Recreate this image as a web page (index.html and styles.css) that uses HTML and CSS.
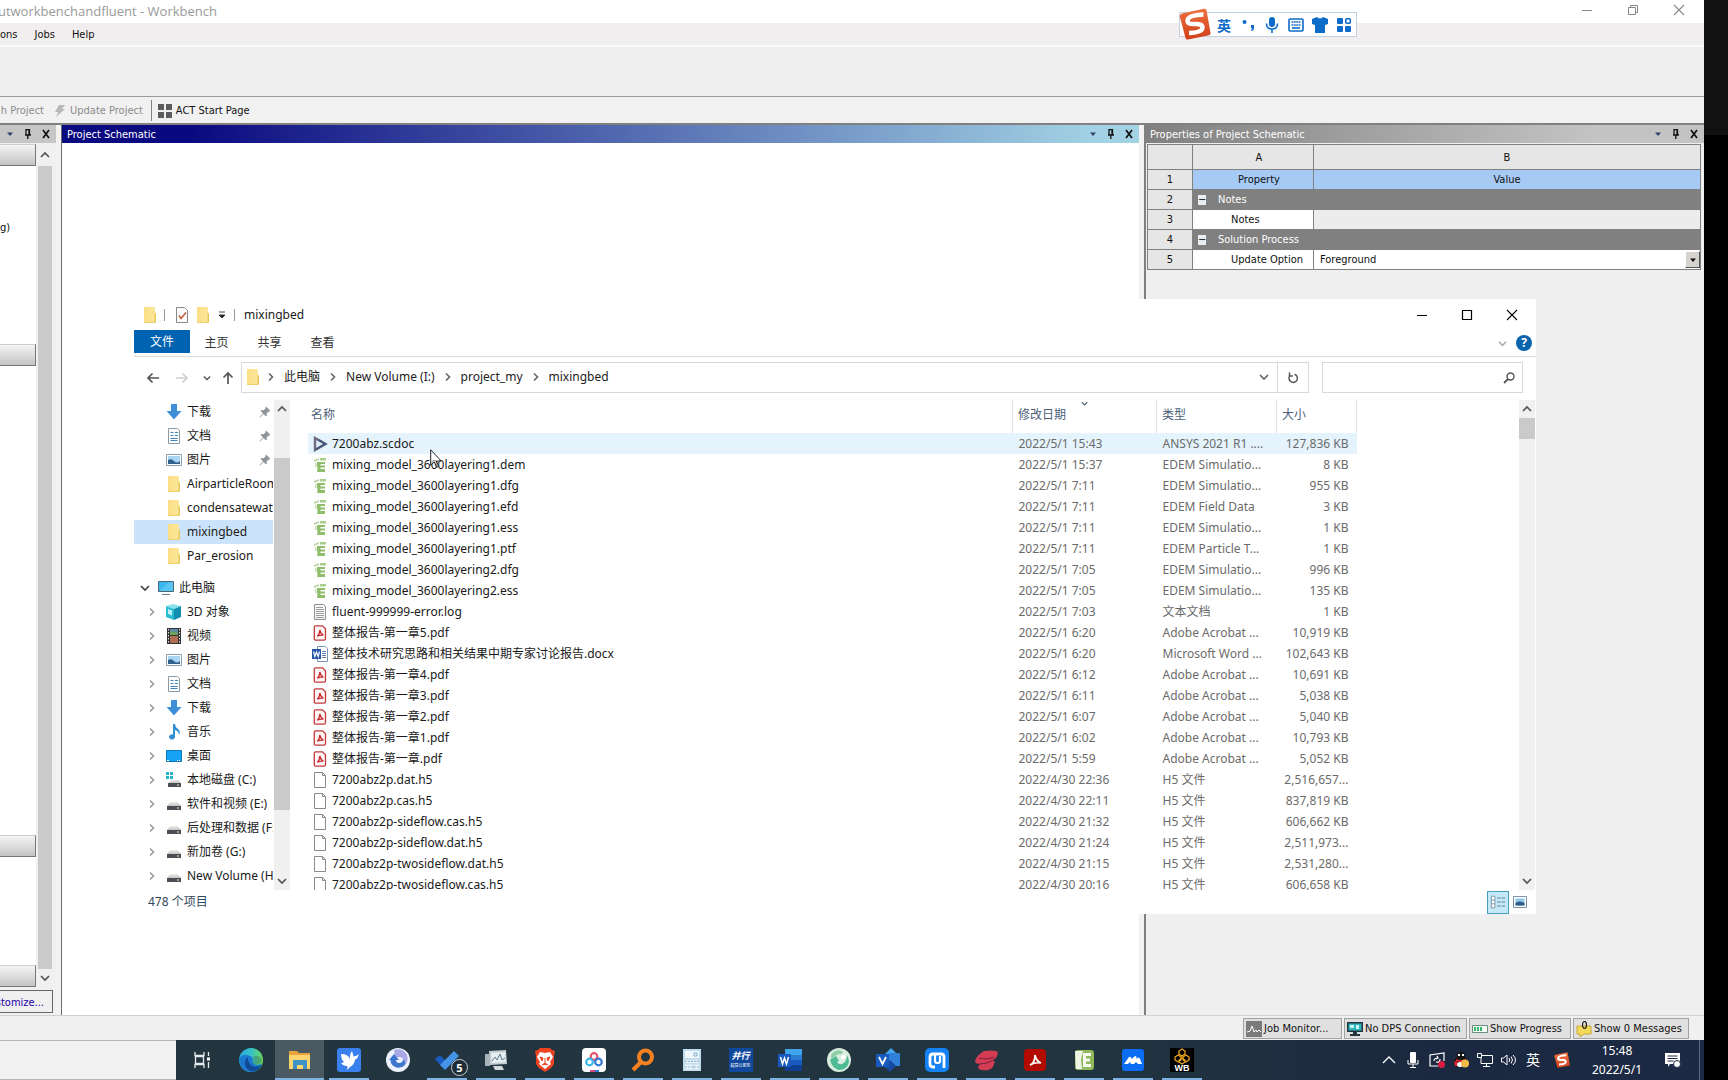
FILE: index.html
```html
<!DOCTYPE html>
<html lang="zh-CN">
<head>
<meta charset="utf-8">
<title>Workbench</title>
<link rel="stylesheet" href="styles.css">
</head>
<body>
<svg class="defs" aria-hidden="true">
  <defs>
    <linearGradient id="gFolder" x1="0" x2="1"><stop offset="0" stop-color="#fbdf85"/><stop offset="1" stop-color="#fbe79b"/></linearGradient>
    <linearGradient id="gEdge" x1="0" y1="0" x2="1" y2="0"><stop offset="0" stop-color="#2aa5dc"/><stop offset=".5" stop-color="#35c1c8"/><stop offset="1" stop-color="#6bd65a"/></linearGradient>
    <linearGradient id="gDisk" x1="0" y1="0" x2="0" y2="1"><stop offset="0" stop-color="#ededed"/><stop offset="1" stop-color="#c4c4c4"/></linearGradient>
    <linearGradient id="gSogou" x1="0" y1="0" x2="0" y2="1"><stop offset="0" stop-color="#f0703f"/><stop offset="1" stop-color="#cf4019"/></linearGradient>
  </defs>
  <symbol id="i-folder" viewBox="0 0 16 16"><path d="M2 0h11v5l1 2v9H2z" fill="url(#gFolder)"/><path d="M12.500 5.500v9l1.500 1.500V7z" fill="#e9c65a"/><path d="M2 15h12v1H2z" fill="#eccf6f"/></symbol>
  <symbol id="i-down" viewBox="0 0 16 16"><path d="M5 0h6v7h4.500L8 15.500.5 7H5z" fill="#3f8fd8"/></symbol>
  <symbol id="i-doc" viewBox="0 0 16 16"><path d="M2.500.5h9l2 2v13h-11z" fill="#fff" stroke="#8a9aa8"/><path d="M4.500 4.500h3M9 4.500h3M4.500 7.500h3M9 7.500h3M4.500 10.500h7M4.500 12.500h7" stroke="#3d86b5"/></symbol>
  <symbol id="i-pic" viewBox="0 0 16 16"><path d="M.5 2.500h15v11H.5z" fill="#fff" stroke="#8aa0b2"/><path d="M2 4h12v8H2z" fill="#a9d4f3"/><path d="M2 8q3-2 6 1t6 0v3H2z" fill="#2f618c"/></symbol>
  <symbol id="i-pin" viewBox="0 0 12 12"><path d="M7 .5 11.500 5l-1 .6-.8-.2-2 2 .2 2.100-.9.9L4.500 8 1 11.500.5 11 4 7.500 1.600 5l.9-.9 2.100.2 2-2-.2-.8z" fill="#8f959b"/></symbol>
  <symbol id="i-pc" viewBox="0 0 16 16"><path d="M.5 1.500h15v10H.5z" fill="#38b6ee" stroke="#4a6478"/><path d="M1 11 11 2h4v9z" fill="#7ad2f6" opacity=".5"/><path d="M4 14.500h8" stroke="#5a7a90"/></symbol>
  <symbol id="i-3d" viewBox="0 0 16 16"><path d="M0 2 7 0l8 2-7 3z" fill="#8ae0ee"/><path d="M0 2l8 3v11l-8-3z" fill="#2bbbd2"/><path d="M8 5l7-3v11l-7 3z" fill="#128fb0"/><path d="M2 5l4 1.500v5L2 10z" fill="#bdf3fa"/></symbol>
  <symbol id="i-video" viewBox="0 0 16 16"><path d="M1 0h14v16H1z" fill="#333"/><path d="M4 1h8v6H4z" fill="#5d8aa8"/><path d="M4 8h8v7H4z" fill="#b06f55"/><path d="M4 4q4-2 8 2v1H4z" fill="#6ea35a"/><path d="M2.500 1v14M13.500 1v14" stroke="#ddd" stroke-dasharray="1.500 1.500"/></symbol>
  <symbol id="i-music" viewBox="0 0 16 16"><path d="M7 0h2q0 3 3 5t1 6q0-4-4-5v6.500A3 2.600 0 1 1 7 10.500z" fill="#2f8fd3"/></symbol>
  <symbol id="i-desk" viewBox="0 0 16 16"><path d="M.5 2.500h15v11H.5z" fill="#17a3f5" stroke="#1277b6"/><path d="M1 12.500h2M11 12.500h1M13 12.500h1" stroke="#fff"/></symbol>
  <symbol id="i-disk" viewBox="0 0 16 16"><path d="M4 6h8l3 4H1z" fill="url(#gDisk)"/><path d="M1 10h14v4H1z" fill="#4b4f53"/><path d="M11 12h2" stroke="#dff5df"/></symbol>
  <symbol id="i-cdisk" viewBox="0 0 16 16"><path d="M0 0h3v3H0zM4 0h3v3H4zM0 4h3v3H0zM4 4h3v3H4z" fill="#25b3c9"/><path d="M5 8h8l2 3H3z" fill="url(#gDisk)"/><path d="M2 11h13v4H2z" fill="#4b4f53"/><path d="M11 13h2" stroke="#dff5df"/></symbol>
  <symbol id="i-scdoc" viewBox="0 0 16 16"><path d="M3 2v12l10.500-6z" fill="#dfe9f5" stroke="#6f6a80" stroke-width="2.400"/><path d="M3.500 13.500 13.500 8 7 4" fill="none" stroke="#3b5679" stroke-width="1.600"/></symbol>
  <symbol id="i-edem" viewBox="0 0 16 16"><path d="M2 3 7 1v2L2 5z" fill="#bcd7a3"/><path d="M5 5h8v2H8.500v1.500H13v2H8.500V12H13v3H5q1-3 0-6z" fill="#8fbd6a"/><path d="M8 1h6v2.500H8z" fill="#a9cd8a"/><path d="M3 6h1.500v4H3z" fill="#c8dfb3"/></symbol>
  <symbol id="i-log" viewBox="0 0 16 16"><path d="M2.500.5h9l2 2v13h-11z" fill="#f8f8f8" stroke="#8d8d8d"/><path d="M4 3.500h7M4 5.500h8M4 7.500h8M4 9.500h8M4 11.500h8M4 13.500h8" stroke="#9c9c9c"/></symbol>
  <symbol id="i-pdf" viewBox="0 0 16 16"><path d="M3.500.8h7l3 3v9.700q0 1.700-1.500 1.700H3.500Q2.300 15.200 2.300 14V2q0-1.200 1.200-1.200z" fill="#fff5f4" stroke="#c23a3c" stroke-width="1.300"/><path d="M5.200 11.200q2.300-1.500 2.600-6.200.8 4 3.600 5.200-3-.6-6.200 1z" fill="none" stroke="#c8282c" stroke-width="1.300"/></symbol>
  <symbol id="i-docx" viewBox="0 0 16 16"><path d="M5.500.5h8l2 2v13h-10z" fill="#fff" stroke="#7b94b5"/><path d="M10 5.500h4M10 7.500h4M10 9.500h4M10 11.500h4" stroke="#5a7dac"/><path d="M0 3h9v10H0z" fill="#2456a6"/><path d="m1.500 5.500 1.300 5L4.500 6l1.700 4.500 1.300-5" fill="none" stroke="#fff" stroke-width="1.200"/></symbol>
  <symbol id="i-file" viewBox="0 0 16 16"><path d="M2.500.5h8l3 3v12h-11z" fill="#fff" stroke="#8a8a8a"/><path d="M10.500.5v3h3" fill="none" stroke="#8a8a8a"/></symbol>
  <symbol id="i-props" viewBox="0 0 16 16"><path d="M2.500.5h8l3 3v12h-11z" fill="#fdfdfd" stroke="#85888c"/><path d="m5 8.500 2 3 5-6" fill="none" stroke="#c25b3a" stroke-width="1.500"/></symbol>
  <symbol id="i-chev" viewBox="0 0 10 10"><path d="m3 1.500 3.500 3.500L3 8.500" fill="none" stroke="currentColor" stroke-width="1.600"/></symbol>
  <symbol id="i-chevd" viewBox="0 0 10 10"><path d="m1 3 4 4 4-4" fill="none" stroke="currentColor" stroke-width="1.700"/></symbol>
  <symbol id="i-chevu" viewBox="0 0 10 10"><path d="m1 7 4-4 4 4" fill="none" stroke="currentColor" stroke-width="1.700"/></symbol>
  <symbol id="i-arrow" viewBox="0 0 14 14"><path d="M13 7H2M6.500 2.500 2 7l4.500 4.500" fill="none" stroke="currentColor" stroke-width="1.700"/></symbol>
  <symbol id="i-tri" viewBox="0 0 8 8"><path d="M1 2.500h6L4 6z" fill="currentColor"/></symbol>
  <symbol id="i-dpin" viewBox="0 0 10 10"><path d="M2 6h6M3 6V.7h3.500V6M6 .7V6M4.800 6v4" fill="none" stroke="currentColor" stroke-width="1.300"/></symbol>
  <symbol id="i-dx" viewBox="0 0 10 10"><path d="m2 1 6 8M8 1 2 9" stroke="currentColor" stroke-width="1.700"/></symbol>
  <symbol id="i-min" viewBox="0 0 12 12"><path d="M1 6.500h10" stroke="currentColor"/></symbol>
  <symbol id="i-max" viewBox="0 0 12 12"><path d="M1.500 1.500h9v9h-9z" fill="none" stroke="currentColor" stroke-width="1.200"/></symbol>
  <symbol id="i-restore" viewBox="0 0 12 12"><path d="M1.500 3.500h7v7h-7zM3.500 3.500v-2h7v7h-2" fill="none" stroke="currentColor"/></symbol>
  <symbol id="i-x" viewBox="0 0 12 12"><path d="m1 1 10 10M11 1 1 11" stroke="currentColor" stroke-width="1.100"/></symbol>
  <symbol id="i-sogou" viewBox="0 0 32 32"><path d="M3 5.500 25 .8q2-.4 2.500 1.500l4 22.500q.3 2-1.500 2.500L9 31.500q-2 .3-2.500-1.500L.8 8.500Q.5 6.200 3 5.500z" fill="url(#gSogou)"/><path d="M24.500 6.500Q9 7 8.500 12.500q-.3 4 7 3.500 8-.5 8 3.500 0 5-13.500 5.500" fill="none" stroke="#fff" stroke-width="4.400"/></symbol>
</svg>

<div class="display">
  <main class="screen">
    <section class="workbench">
      <header class="wb-title">
        <div class="cut title-cut"><span>outworkbenchandfluent - Workbench</span></div>
        <div class="wb-controls">
          <button aria-label="最小化"><svg><use href="#i-min"/></svg></button>
          <button aria-label="还原"><svg><use href="#i-restore"/></svg></button>
          <button aria-label="关闭"><svg><use href="#i-x"/></svg></button>
        </div>
      </header>
      <nav class="wb-menu"><button>ons</button><button>Jobs</button><button>Help</button></nav>
      <div class="wb-space"></div>
      <div class="wb-tools">
        <div class="cut tool-cut"><button disabled>h Project</button></div>
        <button disabled class="update"><svg viewBox="0 0 10 12"><path d="M4 0h6L7 4h3L1 12l2-5H0z" fill="#b9b9b9"/></svg>Update Project</button>
        <button class="act"><svg viewBox="0 0 14 14"><path d="M0 0h6v6H0zM8 0h6v6H8zM0 8h6v6H0zM8 8h6v6H8z" fill="#5c5c5c"/></svg>ACT Start Page</button>
      </div>
      <div class="docks">
        <aside class="toolbox">
          <div class="dock-head"><span class="grow"></span><button aria-label="菜单"><svg class="tri"><use href="#i-tri"/></svg></button><button aria-label="固定"><svg><use href="#i-dpin"/></svg></button><button aria-label="关闭"><svg><use href="#i-dx"/></svg></button></div>
          <div class="toolbox-body">
            <div class="groups">
              <div class="group"></div>
              <div class="group-items first"><span>g)</span></div>
              <div class="group"></div>
              <div class="group-items"></div>
              <div class="group"></div>
              <div class="group-items third"></div>
              <div class="group"></div>
            </div>
            <div class="scroll"><svg><use href="#i-chevu"/></svg><div class="thumb"></div><svg><use href="#i-chevd"/></svg></div>
          </div>
          <div class="customize"><a href="#">stomize...</a></div>
        </aside>
        <section class="schematic">
          <div class="dock-head active"><h2>Project Schematic</h2><button aria-label="菜单"><svg class="tri"><use href="#i-tri"/></svg></button><button aria-label="固定"><svg><use href="#i-dpin"/></svg></button><button aria-label="关闭"><svg><use href="#i-dx"/></svg></button></div>
        </section>
        <section class="properties">
          <div class="dock-head"><h2>Properties of Project Schematic</h2><button aria-label="菜单"><svg class="tri"><use href="#i-tri"/></svg></button><button aria-label="固定"><svg><use href="#i-dpin"/></svg></button><button aria-label="关闭"><svg><use href="#i-dx"/></svg></button></div>
          <table class="props">
            <colgroup><col class="c-num"><col class="c-a"><col></colgroup>
            <tr class="letters"><th></th><th class="a">A</th><th>B</th></tr>
            <tr class="names"><th>1</th><td class="a">Property</td><td>Value</td></tr>
            <tr class="sect"><th>2</th><td colspan="2"><i>−</i>Notes</td></tr>
            <tr><th>3</th><td class="pname">Notes</td><td class="empty"></td></tr>
            <tr class="sect"><th>4</th><td colspan="2"><i>−</i>Solution Process</td></tr>
            <tr><th>5</th><td class="pname"><label for="upd">Update Option</label></td><td class="pick"><div><select id="upd"><option>Foreground</option></select><span><svg class="tri"><use href="#i-tri"/></svg></span></div></td></tr>
          </table>
        </section>
      </div>
      <footer class="wb-status">
        <button class="b1"><svg viewBox="0 0 16 16"><path d="M0 0h16v16H0z" fill="#7b7b7b"/><path d="m1 11 3-1 2-5 2 6 2-2 1 2 2-2 2 2" fill="none" stroke="#fff"/></svg>Job Monitor...</button>
        <button class="b2"><svg viewBox="0 0 16 16"><path d="M0 1h16v10H0z" fill="#23353c"/><path d="M1.500 2.500h13v7h-13z" fill="#2fb5bd"/><path d="M3 4h4v3H3zM9 4h3v4H9z" fill="#c8f4f4"/><path d="M6 11h4v2h3v2H3v-2h3z" fill="#23353c"/></svg>No DPS Connection</button>
        <button class="b3"><svg viewBox="0 0 16 16"><path d="M.5 4.500h15v7H.5z" fill="#f3fbf5" stroke="#6a8f7b"/><path d="M2 6h2v4H2zM5 6h2v4H5zM8 6h2v4H8z" fill="#36b56c"/></svg>Show Progress</button>
        <button class="b4"><svg viewBox="0 0 16 16"><path d="M1 5h14v8H8l-4 3v-3H1z" fill="#f4d95a" stroke="#c9a93a"/><ellipse cx="8.500" cy="4" rx="2" ry="3.500" fill="none" stroke="#222" stroke-width="1.200"/></svg>Show 0 Messages</button>
      </footer>
    </section>

    <footer class="taskbar">
      <div class="search"></div>
      <div class="apps">
        <button aria-label="任务视图"><svg viewBox="0 0 24 24"><path d="M5 4v3.500h9V4M5 20v-3.500h9V20M5.500 8.500h8v7h-8zM18.500 4v4M18.500 14v6" fill="none" stroke="#e6ecee" stroke-width="1.300"/><path d="M17 9.500h3v3h-3z" fill="#fff"/></svg></button>
        <button aria-label="Edge"><svg viewBox="0 0 24 24"><circle cx="12" cy="12" r="12" fill="url(#gEdge)"/><path d="M0 12Q1 7 7 7q7 0 7 6-1 2 1 3 4 2 8-.5Q20 24 12 24 1 23 0 12z" fill="#1a79cf"/><path d="M9 9q-4 3-3 8 2 6 8 6.500 6-1 8.500-6.500-4 2.500-8 1.500-6-2-5.500-9.500z" fill="#114a98"/><path d="M13 10q3 2 1 4-1 2 2 2.500 5 .5 7-3.500 0-3-2-4-4-3-8 1z" fill="#233640" opacity=".25"/></svg></button>
        <button class="open current" aria-label="文件资源管理器"><svg viewBox="0 0 24 24"><path d="M1 3h8l2 2h11v16H1z" fill="#e8a33d"/><path d="M1 7h21v14H1z" fill="#fbd670"/><path d="M5 12h14v9h-4v-4H9v4H5z" fill="#3e93c4"/></svg></button>
        <button class="open" aria-label="迅雷"><svg viewBox="0 0 24 24"><rect width="24" height="24" rx="3" fill="#3a80ee"/><path d="M4 6q7 0 9 5-.5-5 2-8 1 3 1.500 5.500 3-.5 5.500-2.500-1 4-4 6-1 5-5 7l-3 3q1-3 0-4-4 0-6-3 2 0 3-1-3-3-3-8z" fill="#fff"/></svg></button>
        <button aria-label="浏览器"><svg viewBox="0 0 24 24"><circle cx="12" cy="12" r="12" fill="#eef2fc"/><path d="M8 2q9-3 13 5 2 7-3 10 2-6-4-8l-5 .5z" fill="#a9a8e6"/><path d="M5 9q-2 7 4 10 6 2 10-2 1-3-2-6 0 4-4 4-3 0-3-3h3L8 6 3 12h2z" fill="#3f77cf"/></svg></button>
        <button class="open" aria-label="To Do"><svg viewBox="0 0 24 24"><path d="m0 11 5-4 6 6-5 5z" fill="#185abd"/><path d="M5 17 19 3l5 5L10 22z" fill="#4593e6"/></svg><b>5</b></button>
        <button class="open" aria-label="监视器"><svg viewBox="0 0 24 24"><path d="m5 3 17-1 1 14-17 1z" fill="#c3ccd1"/><path d="m7 5 14-1 1 10-14 1z" fill="#e8eff3"/><path d="m8 13 3-4 2 3 3-6 2 6 3-2" fill="none" stroke="#5c7c92"/><path d="M1 6h5v12H1z" fill="#a8b2b8"/><path d="M9 18h9l2 4h-9z" fill="#d5d9db"/></svg></button>
        <button class="open" aria-label="Brave"><svg viewBox="0 0 24 24"><path d="M7 0h10l2 2 3 1-1 5 0 8-3 4-6 4-6-4-3-4V8L2 3l3-1z" fill="#ee4323"/><path d="m7 4 5 1 5-1 3 5-3 5 1 2-6 5-6-5 1-2-3-5z" fill="#fff"/><path d="m7 9 3 1-1 3zm10 0-3 1 1 3zM12 10v5m-3 2 3-2 3 2" fill="#ee4323" stroke="#ee4323"/></svg></button>
        <button class="open" aria-label="百度网盘"><svg viewBox="0 0 24 24"><rect width="24" height="24" rx="4" fill="#fff"/><g fill="none" stroke-width="2.200"><circle cx="12" cy="8.500" r="3.300" stroke="#e4516a"/><circle cx="7.500" cy="14" r="3.300" stroke="#39b6e6"/><circle cx="16.500" cy="14" r="3.300" stroke="#3478d6"/></g><path d="M8 22h5v2H8z" fill="#d44b7b"/><path d="M13 22h4v2h-4z" fill="#3478d6"/></svg></button>
        <button class="open" aria-label="Everything"><svg viewBox="0 0 24 24"><circle cx="14.500" cy="9" r="6.500" fill="none" stroke="#f58220" stroke-width="4"/><path d="m10 14-8 8" stroke="#f58220" stroke-width="4"/></svg></button>
        <button class="open" aria-label="计算器"><svg viewBox="0 0 24 24"><path d="M3 1h18v22H3z" fill="#c3dcec"/><path d="M5 3h14v7H5z" fill="#f2f9fd"/><path d="M14 5h3v3h-3z" fill="none" stroke="#78aecf"/><path d="M5 12.500h14v2.500H5zM5 16.500h8v5H5zM14.500 16.500H19v5h-4.500z" fill="#eaf4fa"/><path d="M5 13.500h14M5 19h14" stroke="#8db6d1" stroke-dasharray="2 1"/></svg></button>
        <button class="open cloud" aria-label="并行超算云服务"><span>并行</span><small>超算云服务</small></button>
        <button class="open" aria-label="Word"><svg viewBox="0 0 24 24"><path d="M7 1h17v6H7z" fill="#41a5ee"/><path d="M7 7h17v5H7z" fill="#2b7cd3"/><path d="M7 12h17v5H7z" fill="#185abd"/><path d="M7 17h17v6H7z" fill="#103f91"/><path d="M0 6h13v13H0z" fill="#185abd"/><path d="m2.500 9 2 7 2-6 2 6 2-7" fill="none" stroke="#fff" stroke-width="1.500"/></svg></button>
        <button class="open" aria-label="浏览器"><svg viewBox="0 0 24 24"><circle cx="12" cy="12" r="12" fill="#d8ecdf"/><path d="M3 12q2 8 9 10 8 0 10-8 0-4-2-7 0 7-5 9-3 1-5-2l2-1-3-5-5 3z" fill="#4dbb93"/><path d="M5 5q5-4 10-2 2 2-1 3-5 0-9 5-2-2 0-6z" fill="#8fd0a6"/><path d="M14 8q3-2 5 0-1 4-5 3z" fill="#fff"/></svg></button>
        <button class="open" aria-label="Visio"><svg viewBox="0 0 24 24"><path d="m15 0 6 6-6 6-6-6z" fill="#41a5ee"/><path d="M13 5h11v13H13z" fill="#2f80d8"/><path d="m14 12 6 6-6 6-6-6z" fill="#154a9c"/><path d="M0 6h13v13H0z" fill="#185abd"/><path d="m3 9 3.500 7L10 9" fill="none" stroke="#fff" stroke-width="1.800"/></svg></button>
        <button class="open" aria-label="MobaXterm"><svg viewBox="0 0 24 24"><rect width="24" height="24" rx="5" fill="#1681f2"/><path d="M10 19H8q-3 0-3-3V9q0-3 3-3h8q3 0 3 3v11" fill="none" stroke="#fff" stroke-width="2.800"/><path d="M10 6v7q0 2 2.500 2t2.500-2V8" fill="none" stroke="#fff" stroke-width="2.200"/></svg></button>
        <button class="open" aria-label="Mendeley"><svg viewBox="0 0 24 24"><path d="M10 3q7-1 12 0 3 1 1 5-1 3-5 4 4 1 2 4-1 5-6 6-6 1-9-1-2-2 1-5-5 0-5-3 2-6 9-10z" fill="#d33c52"/><path d="M5 10q9 2 15-1M5 16q7 0 13-3" fill="none" stroke="#7a1f3e"/></svg></button>
        <button class="open" aria-label="Acrobat"><svg viewBox="0 0 24 24"><rect x="1" y="1" width="22" height="22" rx="4" fill="#b30b00"/><path d="M7 17q5-2 5-10 1 6 6 8-6-1-11 2z" fill="none" stroke="#fff" stroke-width="1.700"/></svg></button>
        <button class="open" aria-label="EDEM"><svg viewBox="0 0 24 24"><rect x="3" y="2" width="19" height="20" rx="3" fill="#8fb95c"/><path d="M3 3h8l-2 9 1 9H4z" fill="#eef4e4"/><path d="M11 5h8v3h-5v2.500h4v3h-4V16h5v3h-8z" fill="#f5faee"/></svg></button>
        <button class="open" aria-label="会议"><svg viewBox="0 0 24 24"><rect x="1" y="1" width="22" height="22" rx="3" fill="#0b6cf4"/><path d="m3 16 5-7q2-1 2.500 2L14 8q2 0 1.500 3Q18 8 19 11l2 5h-4l-2-2-2 2h-3l-1-2-2 2z" fill="#fff"/></svg></button>
        <button class="open" aria-label="Workbench"><svg viewBox="0 0 24 24"><path d="M0 0h24v24H0z" fill="#000"/><path d="m12 1 3 2v3l-3 2-3-2V3zM8 7l3 2v3l-3 2-3-2V9zM16 7l3 2v3l-3 2-3-2V9zM12 10l3 2v2l-3 2-3-2v-2z" fill="none" stroke="#eaa21c" stroke-width="1.300"/><text x="12" y="23" text-anchor="middle" class="wb-txt">WB</text></svg></button>
      </div>
      <div class="tray">
        <button aria-label="显示隐藏的图标"><svg viewBox="0 0 16 16"><path d="m2 11 6-6 6 6" fill="none" stroke="#fff" stroke-width="1.300"/></svg></button>
        <button aria-label="麦克风"><svg viewBox="0 0 16 16"><rect x="5" y="0" width="6" height="11" rx="1" fill="#fff"/><path d="M3 8v4h10V8M8 12v3M5 15.500h6" fill="none" stroke="#fff"/></svg></button>
        <button aria-label="更新"><svg viewBox="0 0 16 16"><path d="M15 9V1L1 3v11h8M5 9q0-3 4-3M7 10q4 1 4-3M8 4l1 2-2 1" fill="none" stroke="#fff" stroke-width="1.200"/><circle cx="12.500" cy="12.500" r="3.500" fill="#d91c3f"/></svg></button>
        <button aria-label="QQ"><svg viewBox="0 0 16 16"><path d="M8 0q4 0 4 5l3 5-2 1-1 4H3l-1-4-2-1 4-5q0-5 4-5z" fill="#141414"/><path d="M5 2h2v2H5zM9 2h2v2H9z" fill="#fff"/><path d="M3 7q5 2 10 0l-1 3q-5 1-9-1z" fill="#d8202d"/><path d="M1 10l3-2 1 6H2z" fill="#d8202d"/><ellipse cx="7" cy="12.500" rx="3" ry="2.500" fill="#fff"/><circle cx="12" cy="11.500" r="4" fill="#f1b94a"/></svg></button>
        <button aria-label="网络"><svg viewBox="0 0 16 16"><path d="M5 3.500h10.500v8H4V6M9.500 12v2.500M6 14.500h7M.5 1.500h4v4h-4z" fill="none" stroke="#fff"/></svg></button>
        <button aria-label="音量"><svg viewBox="0 0 16 16"><path d="M.5 6h2L6 3v10l-3.500-3h-2zM8 6q1.500 2 0 4M10 4.500q3 3.500 0 7M12 3q5 5 0 10" fill="none" stroke="#fff"/></svg></button>
        <button class="lang">英</button>
        <button class="sg" aria-label="搜狗"><svg><use href="#i-sogou"/></svg></button>
        <button class="clock"><span>15:48</span><span>2022/5/1</span></button>
        <button class="note" aria-label="通知"><svg viewBox="0 0 16 16"><path d="M0 1h15v11H5l-2 3v-3H0z" fill="#fff"/><path d="M2.500 4h10M2.500 6.500h10M2.500 9h6" stroke="#1d2b42"/><circle cx="12" cy="12" r="3.500" fill="#fff" stroke="#1d2b42"/></svg></button>
      </div>
    </footer>

    <section class="explorer">
      <header class="ex-title">
        <svg><use href="#i-folder"/></svg><span class="bar"></span>
        <svg><use href="#i-props"/></svg><svg><use href="#i-folder"/></svg>
        <svg class="qa" viewBox="0 0 8 8"><path d="M1 1h6M1 4h6L4 7z" fill="#222" stroke="#222" stroke-width=".8"/></svg><span class="bar"></span>
        <h1>mixingbed</h1>
        <button aria-label="最小化"><svg><use href="#i-min"/></svg></button>
        <button aria-label="最大化"><svg><use href="#i-max"/></svg></button>
        <button aria-label="关闭"><svg><use href="#i-x"/></svg></button>
      </header>
      <nav class="ribbon"><button class="file">文件</button><button>主页</button><button>共享</button><button>查看</button><span class="grow"></span><svg class="fold"><use href="#i-chevd"/></svg><button class="help">?</button></nav>
      <div class="address">
        <button aria-label="后退"><svg><use href="#i-arrow"/></svg></button>
        <button class="off" aria-label="前进"><svg class="flip"><use href="#i-arrow"/></svg></button>
        <button class="recent" aria-label="最近"><svg><use href="#i-chevd"/></svg></button>
        <button class="up" aria-label="向上"><svg class="turn"><use href="#i-arrow"/></svg></button>
        <div class="path">
          <svg class="fold-icon"><use href="#i-folder"/></svg>
          <svg><use href="#i-chev"/></svg><a href="#">此电脑</a>
          <svg><use href="#i-chev"/></svg><a href="#">New Volume (I:)</a>
          <svg><use href="#i-chev"/></svg><a href="#">project_my</a>
          <svg><use href="#i-chev"/></svg><a href="#">mixingbed</a>
          <span class="grow"></span>
          <svg><use href="#i-chevd"/></svg>
          <button aria-label="刷新"><svg viewBox="0 0 12 12"><path d="M7.500 2.200A4.200 4.200 0 1 1 3 3.500M2.500.500v3.500H6" fill="none" stroke="#555" stroke-width="1.500"/></svg></button>
        </div>
        <label class="find"><input type="text" aria-label="搜索"><svg viewBox="0 0 12 12"><circle cx="7.500" cy="4.500" r="3.500" fill="none" stroke="#555" stroke-width="1.400"/><path d="M5 7 1 11" stroke="#555" stroke-width="1.800"/></svg></label>
      </div>
      <div class="ex-body">
        <nav class="tree">
          <ul>
            <li><svg><use href="#i-down"/></svg><span>下载</span><svg class="pin"><use href="#i-pin"/></svg></li>
            <li><svg><use href="#i-doc"/></svg><span>文档</span><svg class="pin"><use href="#i-pin"/></svg></li>
            <li><svg><use href="#i-pic"/></svg><span>图片</span><svg class="pin"><use href="#i-pin"/></svg></li>
            <li><svg><use href="#i-folder"/></svg><span>AirparticleRoom</span></li>
            <li><svg><use href="#i-folder"/></svg><span>condensatewater</span></li>
            <li class="sel"><svg><use href="#i-folder"/></svg><span>mixingbed</span></li>
            <li><svg><use href="#i-folder"/></svg><span>Par_erosion</span></li>
          </ul>
          <ul class="pc">
            <li class="root"><svg class="tw"><use href="#i-chevd"/></svg><svg><use href="#i-pc"/></svg><span>此电脑</span></li>
            <li><svg class="tw"><use href="#i-chev"/></svg><svg><use href="#i-3d"/></svg><span>3D 对象</span></li>
            <li><svg class="tw"><use href="#i-chev"/></svg><svg><use href="#i-video"/></svg><span>视频</span></li>
            <li><svg class="tw"><use href="#i-chev"/></svg><svg><use href="#i-pic"/></svg><span>图片</span></li>
            <li><svg class="tw"><use href="#i-chev"/></svg><svg><use href="#i-doc"/></svg><span>文档</span></li>
            <li><svg class="tw"><use href="#i-chev"/></svg><svg><use href="#i-down"/></svg><span>下载</span></li>
            <li><svg class="tw"><use href="#i-chev"/></svg><svg><use href="#i-music"/></svg><span>音乐</span></li>
            <li><svg class="tw"><use href="#i-chev"/></svg><svg><use href="#i-desk"/></svg><span>桌面</span></li>
            <li><svg class="tw"><use href="#i-chev"/></svg><svg><use href="#i-cdisk"/></svg><span>本地磁盘 (C:)</span></li>
            <li><svg class="tw"><use href="#i-chev"/></svg><svg><use href="#i-disk"/></svg><span>软件和视频 (E:)</span></li>
            <li><svg class="tw"><use href="#i-chev"/></svg><svg><use href="#i-disk"/></svg><span>后处理和数据 (F:)</span></li>
            <li><svg class="tw"><use href="#i-chev"/></svg><svg><use href="#i-disk"/></svg><span>新加卷 (G:)</span></li>
            <li><svg class="tw"><use href="#i-chev"/></svg><svg><use href="#i-disk"/></svg><span>New Volume (H:)</span></li>
          </ul>
        </nav>
        <div class="scroll tree-scroll"><svg><use href="#i-chevu"/></svg><div class="thumb"></div><svg><use href="#i-chevd"/></svg></div>
        <div class="list">
          <table class="files">
            <colgroup><col><col class="c-date"><col class="c-type"><col class="c-size"></colgroup>
            <thead><tr><th>名称</th><th class="sorted">修改日期<svg><use href="#i-chevd"/></svg></th><th>类型</th><th>大小</th></tr></thead>
            <tbody>
              <tr class="hover"><td><svg><use href="#i-scdoc"/></svg>7200abz.scdoc</td><td>2022/5/1 15:43</td><td>ANSYS 2021 R1 ....</td><td>127,836 KB</td></tr>
              <tr><td><svg><use href="#i-edem"/></svg>mixing_model_3600layering1.dem</td><td>2022/5/1 15:37</td><td>EDEM Simulatio...</td><td>8 KB</td></tr>
              <tr><td><svg><use href="#i-edem"/></svg>mixing_model_3600layering1.dfg</td><td>2022/5/1 7:11</td><td>EDEM Simulatio...</td><td>955 KB</td></tr>
              <tr><td><svg><use href="#i-edem"/></svg>mixing_model_3600layering1.efd</td><td>2022/5/1 7:11</td><td>EDEM Field Data</td><td>3 KB</td></tr>
              <tr><td><svg><use href="#i-edem"/></svg>mixing_model_3600layering1.ess</td><td>2022/5/1 7:11</td><td>EDEM Simulatio...</td><td>1 KB</td></tr>
              <tr><td><svg><use href="#i-edem"/></svg>mixing_model_3600layering1.ptf</td><td>2022/5/1 7:11</td><td>EDEM Particle T...</td><td>1 KB</td></tr>
              <tr><td><svg><use href="#i-edem"/></svg>mixing_model_3600layering2.dfg</td><td>2022/5/1 7:05</td><td>EDEM Simulatio...</td><td>996 KB</td></tr>
              <tr><td><svg><use href="#i-edem"/></svg>mixing_model_3600layering2.ess</td><td>2022/5/1 7:05</td><td>EDEM Simulatio...</td><td>135 KB</td></tr>
              <tr><td><svg><use href="#i-log"/></svg>fluent-999999-error.log</td><td>2022/5/1 7:03</td><td>文本文档</td><td>1 KB</td></tr>
              <tr><td><svg><use href="#i-pdf"/></svg>整体报告-第一章5.pdf</td><td>2022/5/1 6:20</td><td>Adobe Acrobat ...</td><td>10,919 KB</td></tr>
              <tr><td><svg><use href="#i-docx"/></svg>整体技术研究思路和相关结果中期专家讨论报告.docx</td><td>2022/5/1 6:20</td><td>Microsoft Word ...</td><td>102,643 KB</td></tr>
              <tr><td><svg><use href="#i-pdf"/></svg>整体报告-第一章4.pdf</td><td>2022/5/1 6:12</td><td>Adobe Acrobat ...</td><td>10,691 KB</td></tr>
              <tr><td><svg><use href="#i-pdf"/></svg>整体报告-第一章3.pdf</td><td>2022/5/1 6:11</td><td>Adobe Acrobat ...</td><td>5,038 KB</td></tr>
              <tr><td><svg><use href="#i-pdf"/></svg>整体报告-第一章2.pdf</td><td>2022/5/1 6:07</td><td>Adobe Acrobat ...</td><td>5,040 KB</td></tr>
              <tr><td><svg><use href="#i-pdf"/></svg>整体报告-第一章1.pdf</td><td>2022/5/1 6:02</td><td>Adobe Acrobat ...</td><td>10,793 KB</td></tr>
              <tr><td><svg><use href="#i-pdf"/></svg>整体报告-第一章.pdf</td><td>2022/5/1 5:59</td><td>Adobe Acrobat ...</td><td>5,052 KB</td></tr>
              <tr><td><svg><use href="#i-file"/></svg>7200abz2p.dat.h5</td><td>2022/4/30 22:36</td><td>H5 文件</td><td>2,516,657...</td></tr>
              <tr><td><svg><use href="#i-file"/></svg>7200abz2p.cas.h5</td><td>2022/4/30 22:11</td><td>H5 文件</td><td>837,819 KB</td></tr>
              <tr><td><svg><use href="#i-file"/></svg>7200abz2p-sideflow.cas.h5</td><td>2022/4/30 21:32</td><td>H5 文件</td><td>606,662 KB</td></tr>
              <tr><td><svg><use href="#i-file"/></svg>7200abz2p-sideflow.dat.h5</td><td>2022/4/30 21:24</td><td>H5 文件</td><td>2,511,973...</td></tr>
              <tr><td><svg><use href="#i-file"/></svg>7200abz2p-twosideflow.dat.h5</td><td>2022/4/30 21:15</td><td>H5 文件</td><td>2,531,280...</td></tr>
              <tr><td><svg><use href="#i-file"/></svg>7200abz2p-twosideflow.cas.h5</td><td>2022/4/30 20:16</td><td>H5 文件</td><td>606,658 KB</td></tr>
            </tbody>
          </table>
        </div>
        <div class="scroll list-scroll"><svg><use href="#i-chevu"/></svg><div class="thumb"></div><span class="grow"></span><svg><use href="#i-chevd"/></svg></div>
      </div>
      <footer class="ex-status"><span>478 个项目</span><span class="grow"></span>
        <button class="on" aria-label="详细信息"><svg viewBox="0 0 18 16"><path d="M1.500 1.500h4v13h-4zM1.500 6h4M1.500 10h4" fill="#fff" stroke="#7790a0"/><path d="M8 3.500h9M8 8h9M8 12.500h9" stroke="#51788f" stroke-dasharray="4 1"/></svg></button>
        <button aria-label="大图标"><svg viewBox="0 0 16 16"><path d="M1.500 2.500h13v11h-13z" fill="#fff" stroke="#7e93a3"/><path d="M3.500 4.500h9v7h-9z" fill="#8fc7e8"/><path d="M3.500 9q4-3 9 0v2.500h-9z" fill="#2d5c86"/></svg></button>
      </footer>
    </section>

    <div class="ime">
      <svg class="ime-s"><use href="#i-sogou"/></svg>
      <button class="ime-lang">英</button>
      <button aria-label="标点"><svg viewBox="0 0 16 16"><circle cx="4.500" cy="5" r="2" fill="#0d6cc9"/><path d="M11 8h3v3q0 2.500-3 3l1-3h-1z" fill="#0d6cc9"/></svg></button>
      <button aria-label="语音"><svg viewBox="0 0 16 16"><rect x="5" y="0" width="6" height="10" rx="3" fill="#0d6cc9"/><path d="M2.500 6.500q0 5.500 5.500 5.500t5.500-5.500M8 12v4" fill="none" stroke="#0d6cc9" stroke-width="1.600"/></svg></button>
      <button aria-label="软键盘"><svg viewBox="0 0 16 16"><rect x="1" y="2" width="14" height="12" rx="1" fill="none" stroke="#0d6cc9" stroke-width="1.600"/><path d="M3.500 5h9M3.500 8h9" stroke="#0d6cc9" stroke-width="1.700" stroke-dasharray="1.800 .6"/><path d="M4 11h8" stroke="#0d6cc9" stroke-width="1.600"/></svg></button>
      <button aria-label="皮肤"><svg viewBox="0 0 16 16"><path d="M0 2 5 0q3 3 6 0l5 2v5l-3 1v8H3V8L0 7z" fill="#0d6cc9"/></svg></button>
      <button aria-label="工具箱"><svg viewBox="0 0 16 16"><rect x="1" y="1" width="6" height="6" rx="1" fill="#0d6cc9"/><rect x="9.800" y="1.800" width="4.500" height="4.500" rx="1" fill="none" stroke="#0d6cc9" stroke-width="1.600"/><rect x="1" y="9" width="6" height="6" rx="1" fill="#0d6cc9"/><rect x="9" y="9" width="6" height="6" rx="1" fill="#0d6cc9"/></svg></button>
    </div>
    <svg class="cursor" viewBox="0 0 12 19"><path d="M.7.800v15.500l3.600-3.400 2.300 5.300 2-.9-2.300-5.200h5z" fill="#fff" fill-opacity=".5" stroke="#222"/></svg>
  </main>
  <div class="edge"></div>
</div>
</body>
</html>
```
FILE: styles.css
```css
* { box-sizing: border-box; }
body { margin: 0; font: 12px/16px "Noto Sans", "Noto Sans CJK SC", sans-serif; color: #1a1a1a; }
button { border: 0; padding: 0; background: none; font: inherit; color: inherit; display: flex; align-items: center; justify-content: center; flex: none; }
h1, h2 { margin: 0; font: inherit; }
ul { list-style: none; margin: 0; padding: 0; }
a { color: inherit; text-decoration: none; }
svg { flex: none; display: block; }
table { border-collapse: collapse; table-layout: fixed; }
.defs { position: absolute; width: 0; height: 0; }
.grow { flex: 1; }
.display { display: flex; min-height: 100vh; background: #000; }
.edge { width: 24px; background: linear-gradient(#111 135px, #000 135px); }
.screen { position: relative; flex: 1; min-width: 0; display: flex; flex-direction: column; }

/* Workbench main window */
.workbench { flex: 1; display: flex; flex-direction: column; background: #f0efef; font: 11px/16px "DejaVu Sans Condensed", "DejaVu Sans", sans-serif; color: #111; }
.cut { display: flex; justify-content: flex-end; overflow: hidden; white-space: nowrap; flex: none; }
.wb-title { height: 23px; background: #fff; display: flex; justify-content: space-between; color: #999; font: 13px/22px "Open Sans", sans-serif; }
.title-cut { width: 217px; }
.wb-controls { display: flex; color: #888; height: 20px; padding-right: 2px; }
.wb-controls button { width: 46px; }
.wb-controls svg { width: 12px; height: 12px; }
.wb-menu { height: 24px; display: flex; gap: 17px; padding-top: 2px; border-bottom: 2px solid #fafafa; background: #f1eeef; }
.wb-space { height: 50px; border-bottom: 1px solid #9a9a9a; }
.wb-tools { height: 28px; display: flex; align-items: center; padding-top: 1px; background: #f1f1f1; border-bottom: 2px solid #808080; }
.wb-tools button:disabled { color: #8b8b8b; }
.tool-cut { width: 44px; margin-right: 11px; }
.update { gap: 5px; }
.update svg { width: 10px; height: 12px; }
.act { margin-left: 8px; border-left: 1px solid #808080; height: 21px; padding-left: 6px; gap: 4px; }
.act svg { width: 14px; height: 14px; }
.docks { flex: 1; display: flex; background: #f2f2f2; }
.dock-head { height: 18px; flex: none; display: flex; align-items: center; padding-right: 1px; color: #111; background: linear-gradient(90deg, #808080, #c3c3c3 80%); }
.dock-head h2 { flex: 1; color: #fff; padding: 2px 0 0 5px; }
.dock-head button { width: 18px; height: 18px; }
.dock-head svg { width: 10px; height: 10px; }
.dock-head .tri { width: 8px; height: 8px; color: #33406b; }
.dock-head.active { background: linear-gradient(90deg, #0a0a80 12%, #a2d2e4 96%); }
.toolbox { width: 56px; margin-right: 5px; display: flex; flex-direction: column; background: #f0f0f0; }
.toolbox .dock-head { background: #c6c6c6; margin-bottom: 1px; }
.toolbox-body { flex: 1; display: flex; gap: 2px; }
.groups { width: 36px; display: flex; flex-direction: column; background: #fff; }
.group { height: 22px; border: 1px solid #777; border-left: 0; border-top-color: #ccc; background: linear-gradient(#f5f5f5, #c4c4c4); }
.group-items { flex: 468; }
.group-items.first { flex: 178; }
.group-items.first span { display: block; margin-top: 54px; }
.group-items.third { flex: 108; }
.scroll { width: 16px; flex: none; display: flex; flex-direction: column; align-items: center; background: #f0f0f0; color: #555; }
.scroll > svg { width: 10px; height: 10px; margin: 4px 0; }
.scroll .thumb { align-self: stretch; background: #cacaca; }
.toolbox .scroll { width: 14px; }
.toolbox .scroll > svg { margin: 6px 0; }
.toolbox .scroll > svg:last-child { margin: 4px 0; }
.toolbox .thumb { flex: 1; }
.customize { height: 23px; width: 53px; margin: 3px 0 2px; border: 1px solid #666; border-left: 0; color: #1a00a8; padding: 4px 8px 0 0; display: flex; justify-content: flex-end; overflow: hidden; }
.schematic { flex: 1; border-left: 1px solid #707070; background: #fff; margin-right: 5px; }
.properties { width: 560px; border-left: 2px solid #808080; background: #efefef; }
.properties .dock-head h2 { padding-left: 4px; }
.props { width: calc(100% - 4px); margin: 1px 0 0 1px; text-align: center; background: #fff; }
.c-num { width: 45px; }
.c-a { width: 121px; }
.props th, .props td { height: 20px; padding: 0; font-weight: normal; border: 1px solid #808080; line-height: 18px; }
.props th { background: #e6e6e6; }
.props .a { padding-left: 12px; }
.props .letters th { height: 25px; padding-top: 2px; }
.props .names td { background: #a6caf4; }
.props .sect td { background: #808080; color: #fff; text-align: left; padding-left: 5px; }
.sect i { display: inline-block; width: 8px; height: 10px; margin-right: 12px; background: #e8eef4; color: #000; font: 10px/10px "DejaVu Sans", sans-serif; text-align: center; }
.props .pname { text-align: left; padding-left: 38px; }
.props .empty { background: #ececec; }
.pick div { display: flex; height: 19px; }
.pick select { appearance: none; flex: 1; border: 0; background: none; font: inherit; color: inherit; padding: 0 0 0 6px; }
.pick span { width: 15px; margin: 1px 0; background: #d6d3ce; border: 1px solid #fff; border-right-color: #555; border-bottom-color: #555; display: flex; align-items: center; justify-content: center; }
.pick svg { width: 8px; height: 8px; }
.wb-status { height: 25px; flex: none; border-top: 1px solid #d0d0d0; background: #f0f0f0; display: flex; justify-content: flex-end; gap: 2px; padding: 2px 15px 1px 0; }
.wb-status button { border: 1px solid #a2a2a2; background: #e1e0e0; justify-content: flex-start; padding: 1px 0 0 2px; gap: 2px; }
.wb-status svg { width: 16px; height: 16px; }
.b1 { width: 99px; }
.b2 { width: 123px; }
.b3 { width: 102px; }
.b4 { width: 116px; }

/* Taskbar */
.taskbar { height: 40px; flex: none; display: flex; background: linear-gradient(90deg, #233640, #21343f 65%, #1b2840 85%, #1c2a45); color: #fff; }
.search { width: 176px; background: #f2f2f2; border: solid #b5b5b5; border-width: 1px 0; }
.apps { display: flex; flex: 1; padding-left: 1px; }
.apps button { width: 49px; height: 40px; position: relative; }
.apps svg { width: 24px; height: 24px; }
.apps .open::after { content: ""; position: absolute; left: 5px; right: 4px; bottom: 0; height: 2px; background: #7eb2e2; }
.apps .current { background: #4b5a62; }
.apps .current::after { left: 0; right: 0; }
.apps b { position: absolute; right: 3px; bottom: 4px; width: 17px; height: 17px; border-radius: 9px; border: 1px solid #c8d0d4; background: #1e2c35; font: bold 11px/15px "Open Sans", sans-serif; }
.apps .cloud { flex-direction: column; }
.cloud span, .cloud small { width: 24px; background: #10489c; }
.cloud span { height: 14px; font: italic bold 9px/16px "Noto Sans CJK SC", sans-serif; }
.cloud small { height: 10px; font: 4px/6px "Noto Sans CJK SC", sans-serif; }
.wb-txt { font: bold 9px "Liberation Sans", sans-serif; fill: #fff; }
.tray { display: flex; border-right: 1px solid #59657c; margin-right: 4px; }
.tray button { width: 24px; height: 40px; }
.tray svg { width: 16px; height: 16px; }
.tray .lang { font-size: 14px; }
.tray .sg { width: 34px; }
.tray .clock { width: 76px; flex-direction: column; line-height: 19px; }
.tray .note { width: 36px; margin-right: 8px; }

/* Explorer window */
.explorer { position: absolute; left: 134px; right: 168px; top: 299px; bottom: 166px; background: #fff; display: flex; flex-direction: column; }
.ex-title { height: 31px; flex: none; display: flex; align-items: center; gap: 5px; padding: 0 4px 0 8px; }
.ex-title > svg { width: 16px; height: 16px; }
.ex-title > .qa { width: 8px; height: 8px; margin: 0 2px; }
.ex-title .bar { width: 1px; height: 12px; background: #999; margin: 0 4px 0 1px; }
.ex-title h1 { flex: 1; }
.ex-title button { width: 40px; color: #000; }
.ex-title button svg { width: 12px; height: 12px; }
.ribbon { height: 27px; flex: none; display: flex; border-bottom: 1px solid #dadbdc; padding-right: 4px; align-items: center; color: #333; }
.ribbon button { width: 53px; height: 26px; padding-bottom: 1px; }
.ribbon .file { width: 56px; height: 23px; padding: 0; background: #0063b1; color: #fff; align-self: flex-start; }
.ribbon .fold { width: 9px; height: 9px; color: #aaa; margin-right: 9px; }
.ribbon .help { width: 16px; height: 16px; border-radius: 8px; background: #0a64ad; color: #fff; padding: 0; font-weight: bold; }
.address { height: 43px; flex: none; display: flex; align-items: center; padding: 0 13px 2px 8px; color: #555; }
.address > button { width: 22px; }
.address svg { width: 10px; height: 10px; }
.address > button svg { width: 14px; height: 14px; }
.address .off { color: #d0d0d0; width: 36px; }
.address .recent { width: 14px; }
.address .recent svg { width: 8px; height: 8px; }
.address .up { margin: 0 2px 0 3px; }
.flip { transform: rotate(180deg); }
.turn { transform: rotate(90deg); }
.path { flex: 1; height: 31px; border: 1px solid #d9d9d9; display: flex; align-items: center; gap: 8px; padding: 0 0 2px 3px; color: #222; margin-right: 13px; }
.path .fold-icon { width: 16px; height: 16px; margin-right: -3px; }
.path > svg { color: #666; }
.path button { width: 31px; height: 29px; border-left: 1px solid #d9d9d9; margin-bottom: -2px; }
.path button svg { width: 12px; height: 12px; }
.find { width: 201px; height: 31px; border: 1px solid #d9d9d9; display: flex; align-items: center; padding-right: 7px; }
.find input { flex: 1; min-width: 0; border: 0; outline: 0; font: inherit; }
.find svg { width: 12px; height: 12px; }
.ex-body { flex: 1; min-height: 0; display: flex; padding-right: 1px; }
.tree { width: 139px; flex: none; overflow: hidden; }
.tree li { height: 24px; display: flex; align-items: center; gap: 5px; padding-left: 32px; white-space: nowrap; }
.tree svg { width: 16px; height: 16px; }
.tree .pin { width: 12px; height: 12px; margin: 0 2px 0 auto; }
.tree .sel { background: #cce4fb; }
.tree .pc { padding-top: 8px; }
.tree .pc li { padding-left: 13px; }
.tree .pc .root { padding-left: 6px; }
.tree .tw { width: 10px; height: 10px; color: #999; margin-right: 4px; }
.tree .root .tw { color: #444; margin-right: 3px; }
.tree-scroll { margin-left: 1px; }
.tree-scroll .thumb { flex: 351; margin-top: 40px; margin-bottom: 62px; }
.list { flex: 1; min-width: 0; overflow: hidden; padding-left: 18px; }
.files { width: calc(100% - 162px); }
.c-date { width: 144px; }
.c-type { width: 120px; }
.c-size { width: 80px; }
.files th { height: 33px; padding: 0 0 4px 5px; text-align: left; font-weight: normal; color: #4c607a; border-right: 1px solid #e3e3e3; line-height: 16px; }
.files th:first-child { padding-left: 3px; }
.files td { height: 21px; padding: 0 4px 0 6px; line-height: 19px; white-space: nowrap; overflow: hidden; color: #6b6b6b; }
.files td:first-child { display: flex; align-items: center; gap: 4px; padding-left: 4px; color: #1a1a1a; }
.files td:last-child { text-align: right; padding: 0 8px 0 0; }
.files svg { width: 16px; height: 16px; }
.sorted { position: relative; }
.files .sorted svg { position: absolute; left: 68px; top: 0; width: 7px; height: 7px; }
.hover { background: #e5f3fd; }
.list-scroll .thumb { height: 21px; }
.ex-status { height: 24px; flex: none; display: flex; align-items: center; padding: 0 5px 0 14px; color: #34495e; }
.ex-status button { width: 22px; height: 23px; }
.ex-status .on { background: #c4e8f6; border: 1px solid #4aa0bf; }
.ex-status svg { width: 16px; height: 16px; }

/* Input method bar */
.ime { position: absolute; right: 347px; top: 12px; height: 25px; padding-left: 32px; border: 1px solid #c3d0e0; background: #fff; display: flex; align-items: center; color: #0d6cc9; }
.ime button { width: 24px; }
.ime svg { width: 16px; height: 16px; }
.ime .ime-s { position: absolute; left: -1px; top: -5px; width: 32px; height: 32px; }
.ime-lang { font: bold 14px/16px "Noto Sans CJK SC", sans-serif; }
.cursor { position: absolute; left: 430px; top: 449px; width: 12px; height: 19px; }
```
